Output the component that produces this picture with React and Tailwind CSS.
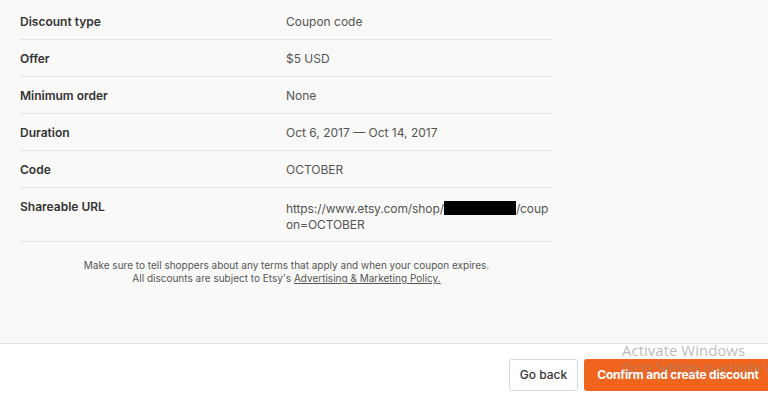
import React from "react";

const rows = [
  { label: "Discount type", value: "Coupon code" },
  { label: "Offer", value: "$5 USD" },
  { label: "Minimum order", value: "None" },
  { label: "Duration", value: "Oct 6, 2017 — Oct 14, 2017" },
  { label: "Code", value: "OCTOBER" },
];

function Row({ label, children, bottom = "pb-[9px]" }) {
  return (
    <div className={`flex border-b border-[#e6e6e3] pt-[11px] ${bottom} text-[12px] leading-[16px]`}>
      <div className="w-[266px] shrink-0 font-semibold text-[#333]">{label}</div>
      <div className="flex-1 text-[#555]">{children}</div>
    </div>
  );
}

export default function App() {
  return (
    <div
      className="relative flex h-[405px] w-[768px] flex-col overflow-hidden bg-white"
      style={{ fontFamily: "Inter, 'Noto Sans', sans-serif" }}
    >
      <div className="h-[343px] shrink-0 bg-[#f9f9f8] pl-[20px] pr-[215px] pt-[3px]">
        {rows.map((r) => (
          <Row key={r.label} label={r.label}>
            {r.value}
          </Row>
        ))}
        <Row label="Shareable URL" bottom="pb-[8px]">
          <span className="-mr-[2px] block break-all tracking-[-0.1px]">
            https://www.etsy.com/shop/
            <span className="inline-block h-[14px] w-[72px] translate-y-[2px] bg-black align-baseline"></span>
            /coupon=OCTOBER
          </span>
        </Row>
        <div className="mt-[17px] text-center text-[10px] leading-[13px] text-[#555]">
          <p>Make sure to tell shoppers about any terms that apply and when your coupon expires.</p>
          <p>
            All discounts are subject to Etsy's{" "}
            <span className="underline">Advertising &amp; Marketing Policy.</span>
          </p>
        </div>
      </div>
      <div className="flex flex-1 items-start justify-end gap-[6px] border-t border-[#e1e3df] pt-[15px]">
        <button className="h-[32px] w-[69px] rounded-[3px] border border-[#d8d8d8] bg-white text-[12px] font-medium text-[#333]">
          Go back
        </button>
        <button className="-mr-[4px] h-[32px] w-[188px] rounded-[3px] bg-[#f1641e] text-[12px] font-bold tracking-[-0.2px] text-white">
          Confirm and create discount
        </button>
      </div>
      <div className="pointer-events-none absolute left-[622px] top-[340px] text-[#8c8c8c]/60">
        <div className="text-[15px] leading-[20px]" style={{ fontFamily: "'Open Sans', sans-serif" }}>
          Activate Windows
        </div>
        <div className="whitespace-nowrap text-[12px] leading-[16px]" style={{ fontFamily: "'Open Sans', sans-serif" }}>
          Go to Settings to activate Windows.
        </div>
      </div>
    </div>
  );
}
